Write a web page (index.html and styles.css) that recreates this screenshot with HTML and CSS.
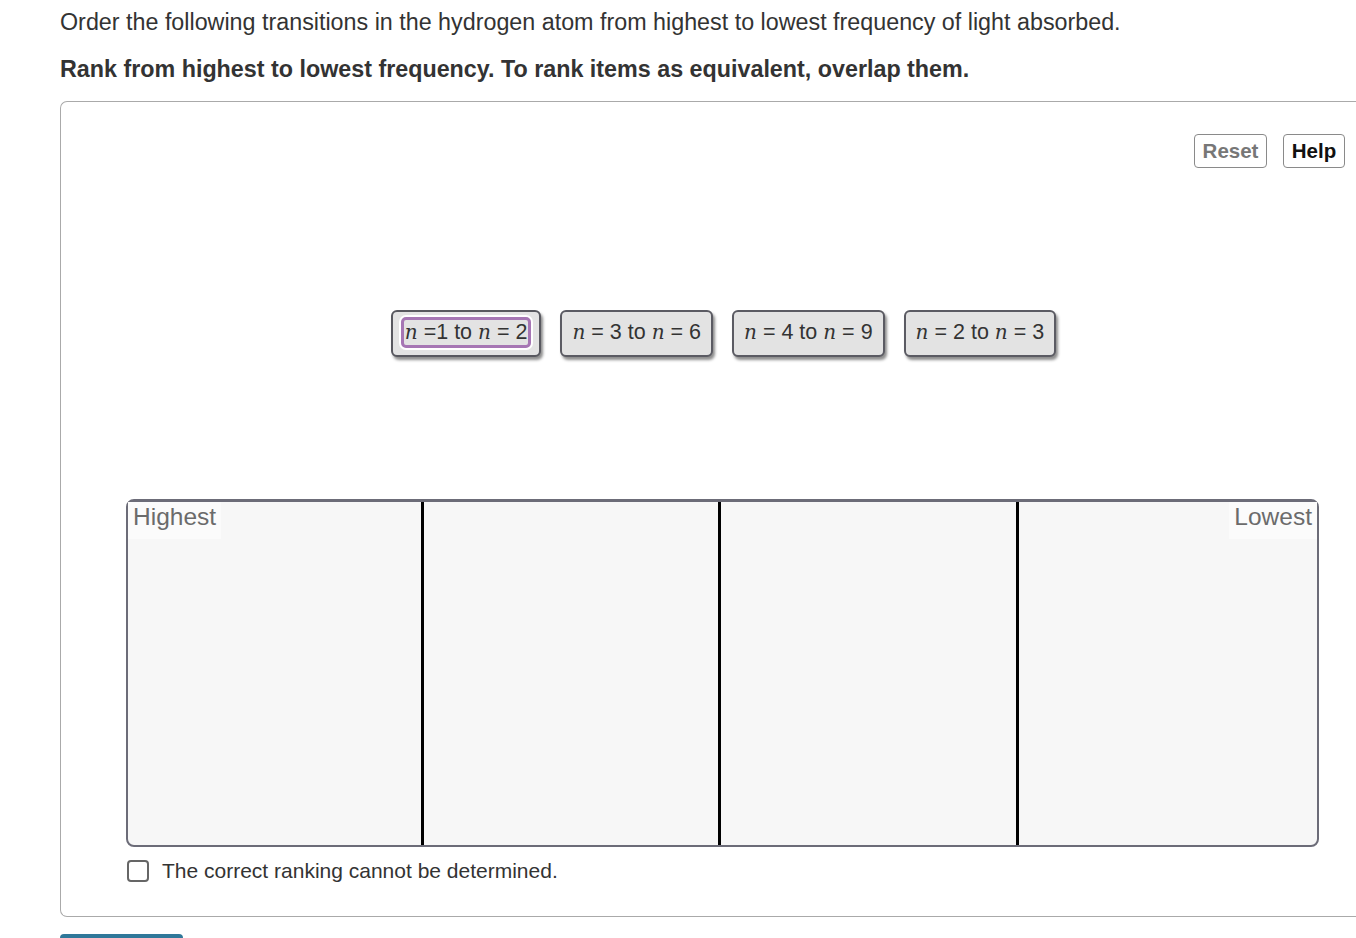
FILE: index.html
```html
<!DOCTYPE html>
<html>
<head>
<meta charset="utf-8">
<link rel="stylesheet" href="styles.css">
</head>
<body>
<p class="q">Order the following transitions in the hydrogen atom from highest to lowest frequency of light absorbed.</p>
<p class="instr">Rank from highest to lowest frequency. To rank items as equivalent, overlap them.</p>
<div class="panel">
  <div class="tools">
    <button class="btn reset">Reset</button>
    <button class="btn help">Help</button>
  </div>
  <div class="work">
    <div class="tiles">
      <div class="tile sel"><span class="inner"><i>n</i> =1 to <i>n</i> = 2</span></div>
      <div class="tile"><span class="inner"><i>n</i> = 3 to <i>n</i> = 6</span></div>
      <div class="tile"><span class="inner"><i>n</i> = 4 to <i>n</i> = 9</span></div>
      <div class="tile"><span class="inner"><i>n</i> = 2 to <i>n</i> = 3</span></div>
    </div>
    <div class="rank">
      <div class="cell"><span class="lbl">Highest</span></div>
      <div class="cell"></div>
      <div class="cell"></div>
      <div class="cell right"><span class="lbl">Lowest</span></div>
    </div>
    <label class="cd"><span class="box"></span>The correct ranking cannot be determined.</label>
  </div>
</div>
<div class="submit"></div>
</body>
</html>
```
FILE: styles.css
```css
html, body { margin: 0; padding: 0; background: #fff; overflow: hidden; }
body {
  width: 1356px; height: 938px;
  font-family: "Liberation Sans", Arial, sans-serif;
  color: #333;
  padding-left: 60px;
  box-sizing: border-box;
}
.q { margin: 0; padding-top: 8px; font-size: 23.3px; line-height: 28px; white-space: nowrap; }
.instr { margin: 19px 0 0; font-size: 23.3px; font-weight: bold; line-height: 28px; white-space: nowrap; }
.panel {
  margin-top: 18px;
  width: 1296px;
  height: 816px;
  box-sizing: border-box;
  border: 1px solid #aaa;
  border-right: none;
  border-radius: 7px 0 0 7px;
  position: relative;
}
.tools {
  display: flex; justify-content: flex-end; gap: 16px;
  padding: 32px 11px 0 0;
}
.btn {
  height: 34px; box-sizing: border-box;
  border: 1px solid #8a8a8a; border-radius: 4px;
  background: #fff;
  font-family: "Liberation Sans", Arial, sans-serif;
  font-weight: bold; font-size: 20.5px;
  padding: 0 6px;
  line-height: 30px;
}
.reset { color: #777; width: 73px; }
.help { color: #111; width: 62px; }
.work { margin-left: 65px; width: 1193px; }
.tiles {
  display: flex; justify-content: center; gap: 19px;
  margin-top: 142px;
  padding-left: 2px;
}
.tile {
  height: 47px; box-sizing: border-box;
  border: 2px solid #5b5b63; border-radius: 6px;
  background: #e3e3e3;
  box-shadow: 2px 3px 3px rgba(0,0,0,0.45);
  display: flex; align-items: center; justify-content: center;
  font-size: 21.5px; color: #333;
  padding: 0 10px 2px;
}
.tile i { font-family: "DejaVu Serif", "Liberation Serif", serif; font-style: italic; font-size: 20px; }
.tile.sel { padding: 0 8px 2px; border-color: #58585f; }
.tile.sel .inner {
  border: 3px solid #a676b4; border-radius: 5px;
  box-shadow: 0 0 0 2px #fff;
  padding: 0 1px; line-height: 25px;
  background: #e3e3e3;
}
.rank {
  margin-top: 142px;
  height: 348px; box-sizing: border-box;
  border: 2px solid #6c6c78; border-top-width: 3px;
  border-radius: 8px;
  background: #f7f7f7;
  display: grid; grid-template-columns: 296px 297px 298px 1fr;
}
.cell { border-right: 3px solid #000; position: relative; }
.cell.right { border-right: none; text-align: right; }
.lbl {
  display: inline-block;
  font-size: 24.5px; color: #6b6b6b;
  background: #fbfbfb;
  padding: 0 5px 7px 5px; line-height: 30px;
}
.cell.right .lbl { padding-right: 5px; }
.cd {
  display: flex; align-items: center;
  margin-top: 12px; margin-left: 1px;
  font-size: 21px; color: #333; line-height: 24px;
}
.box {
  width: 18px; height: 18px;
  border: 2px solid #666; border-radius: 4px;
  margin-right: 13px;
  background: #fff;
}
.submit {
  margin-top: 17px;
  width: 123px; height: 10px;
  background: #2f789a;
  border-radius: 4px 4px 0 0;
}
```
